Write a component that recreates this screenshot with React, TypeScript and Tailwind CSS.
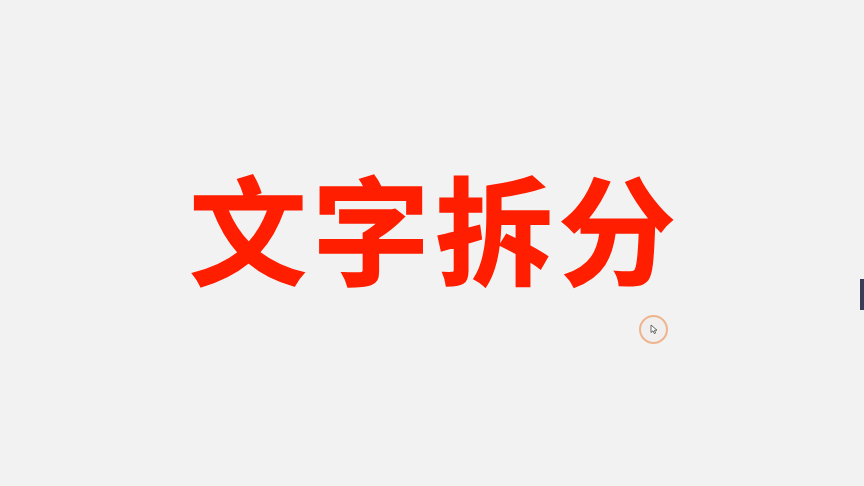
export default function App() {
  return (
    <div className="w-[864px] h-[486px] overflow-hidden relative bg-[#f3f2f3] flex items-start justify-center">
      <h1 className="mt-[155px] ml-[7px] text-[117px] leading-[140px] tracking-[6px] font-bold text-[#ff1e00] [-webkit-text-stroke:1.5px_#ff1e00] whitespace-nowrap [font-family:'Noto_Sans_CJK_SC','Noto_Sans_CJK_JP',sans-serif]">
        文字拆分
      </h1>
      <div className="absolute left-[639px] top-[315px] w-[29px] h-[29px] rounded-full border-2 border-[#eeb48f] bg-[#f0efee] flex items-center justify-center">
        <svg width="10" height="11" viewBox="0 0 10 11">
          <path d="M2 1 L2 8.5 L4 6.8 L5.3 9.6 L6.6 9 L5.4 6.3 L8 6.2 Z" fill="#fff" stroke="#555" strokeWidth="0.9" />
        </svg>
      </div>
      <div className="absolute right-0 top-[279px] w-[4px] h-[31px] bg-[#3a3d55]" />
    </div>
  );
}
